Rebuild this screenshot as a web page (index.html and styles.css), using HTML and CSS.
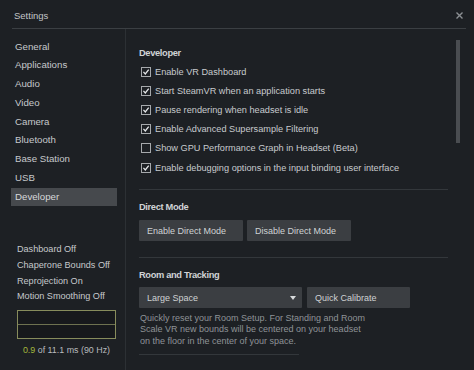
FILE: index.html
```html
<!DOCTYPE html>
<html lang="en">
<head>
  <meta charset="UTF-8"/>
  <title>Settings</title>
  <link rel="stylesheet" href="styles.css">
</head>
<body>
  <div class="window">
    <!-- Title bar -->
    <header class="titlebar">
      <span class="title">Settings</span>
      <svg class="close" width="7" height="7" viewBox="0 0 7 7">
        <path d="M0.5 0.5 L6.5 6.5 M6.5 0.5 L0.5 6.5" stroke="#8c9094" stroke-width="1.4"/>
      </svg>
    </header>

    <div class="body">
      <!-- Sidebar -->
      <nav class="sidebar">
        <ul class="menu">
          <li>General</li>
          <li>Applications</li>
          <li>Audio</li>
          <li>Video</li>
          <li>Camera</li>
          <li>Bluetooth</li>
          <li>Base Station</li>
          <li>USB</li>
          <li class="active">Developer</li>
        </ul>
        <div class="stats">
          <div class="stat">Dashboard Off</div>
          <div class="stat">Chaperone Bounds Off</div>
          <div class="stat">Reprojection On</div>
          <div class="stat">Motion Smoothing Off</div>
          <div class="graph">
            <div class="graph-top"></div>
            <div class="graph-bottom"></div>
          </div>
          <div class="frame-time"><span class="ms">0.9</span> of 11.1 ms (90 Hz)</div>
        </div>
      </nav>

      <!-- Content -->
      <main class="content">
        <div class="panel">
          <section class="group group-dev">
            <h2>Developer</h2>
            <label class="check"><span class="box on"><svg viewBox="0 0 10 10"><path d="M1.8 4.9 L4.1 7.4 L8.4 1.9"/></svg></span>Enable VR Dashboard</label>
            <label class="check"><span class="box on"><svg viewBox="0 0 10 10"><path d="M1.8 4.9 L4.1 7.4 L8.4 1.9"/></svg></span>Start SteamVR when an application starts</label>
            <label class="check"><span class="box on"><svg viewBox="0 0 10 10"><path d="M1.8 4.9 L4.1 7.4 L8.4 1.9"/></svg></span>Pause rendering when headset is idle</label>
            <label class="check"><span class="box on"><svg viewBox="0 0 10 10"><path d="M1.8 4.9 L4.1 7.4 L8.4 1.9"/></svg></span>Enable Advanced Supersample Filtering</label>
            <label class="check"><span class="box"></span>Show GPU Performance Graph in Headset (Beta)</label>
            <label class="check"><span class="box on"><svg viewBox="0 0 10 10"><path d="M1.8 4.9 L4.1 7.4 L8.4 1.9"/></svg></span>Enable debugging options in the input binding user interface</label>
          </section>

          <section class="group group-direct">
            <h2>Direct Mode</h2>
            <div class="buttons">
              <button class="btn">Enable Direct Mode</button>
              <button class="btn">Disable Direct Mode</button>
            </div>
          </section>

          <section class="group group-room">
            <h2>Room and Tracking</h2>
            <div class="buttons wide-gap">
              <div class="select">
                <span>Large Space</span>
                <svg width="6" height="4" viewBox="0 0 6 4"><path d="M0 0 L6 0 L3 4 Z" fill="#d8dadc"/></svg>
              </div>
              <button class="btn">Quick Calibrate</button>
            </div>
            <p class="hint">Quickly reset your Room Setup. For Standing and Room<br>Scale VR new bounds will be centered on your headset<br>on the floor in the center of your space.</p>
            <div class="rule"></div>
          </section>
        </div>
        <div class="scrollbar"><div class="thumb"></div></div>
      </main>
    </div>
  </div>
</body>
</html>
```

FILE: styles.css
```css
*, *::before, *::after { box-sizing: border-box; }

body {
  margin: 0;
  background: #1d2024;
  font-family: 'Liberation Sans', Arial, sans-serif;
  color: #c4c7ca;
}

.window {
  width: 474px; height: 370px;
  overflow: hidden;
  background: #1d2024;
}

/* Title bar */
.titlebar {
  height: 29px;
  margin: 0 8px 0 12px;
  padding: 3px 3px 0 2px;
  display: flex; align-items: center; justify-content: space-between;
  border-bottom: 1px solid #3b3f43;
}
.title { font-size: 9.5px; color: #c2c5c8; }

.body {
  display: flex;
  height: 341px;
}

/* Sidebar */
.sidebar {
  width: 126px; flex: none;
  border-right: 1px solid #2c3034;
  padding: 8.5px 8px 0 11px;
}
.menu { list-style: none; margin: 0; padding: 0; }
.menu li {
  height: 18.75px; line-height: 18.75px;
  padding-left: 4px;
  font-size: 9.7px; color: #c6c9cc;
}
.menu li.active { background: #46494d; color: #d6d8da; }

.stats { margin-top: 36px; padding-left: 6px; }
.stat { height: 15.7px; line-height: 15.7px; font-size: 9.1px; color: #c6c9cc; }
.graph {
  width: 99px; height: 29px;
  margin-top: 5px;
  border: 1px solid #878c5c;
  background: #17191c;
}
.graph-top { height: 14px; border-bottom: 1px solid #6e7250; }
.frame-time {
  width: 99px; margin-top: 5px;
  line-height: 12px; text-align: center;
  font-size: 8.9px; color: #b8bbbe;
}
.frame-time .ms { color: #a3b83c; }

/* Content */
.content { flex: 1; display: flex; }
.panel { width: 322px; padding-left: 13px; }

.group h2 {
  margin: 0;
  font-size: 9.3px; font-weight: bold;
  letter-spacing: -0.35px;
  color: #d0d3d6;
  line-height: 14px;
}
.group-dev { padding: 14.5px 0 12px; border-bottom: 1px solid #33373b; }
.group-dev h2 { line-height: 19px; }
.group-direct { padding: 10px 0 15.5px; border-bottom: 1px solid #33373b; }
.group-room { padding: 10px 0 0; }

.check {
  display: flex; align-items: center; gap: 4px;
  height: 19.1px;
  padding-left: 2px;
  font-size: 9.2px; color: #c8cbce;
}
.box {
  width: 10px; height: 10px; flex: none;
  border: 1px solid #a6a9ac;
  display: flex;
}
.box svg { width: 8px; height: 8px; }
.box path { fill: none; stroke: #e4e6e8; stroke-width: 1.6; }

.buttons { display: flex; gap: 4px; margin-top: 6px; }
.buttons.wide-gap { gap: 5px; margin-top: 5.5px; }
.btn, .select {
  height: 21px;
  background: #3b3e42;
  border: none; border-radius: 1px;
  padding: 0 6px 0 8px;
  font-family: inherit; font-size: 9px; color: #cfd2d4;
  text-align: left;
}
.btn { width: 104px; }
.buttons.wide-gap .btn { width: 103px; }
.select {
  width: 163px;
  display: flex; align-items: center; justify-content: space-between;
}

.hint {
  margin: 4.5px 0 0 1px;
  font-size: 9px; line-height: 11.5px;
  color: #8f9397;
}
.rule { width: 160px; margin-top: 7.4px; border-top: 1px solid #33373b; }

/* Scrollbar */
.scrollbar { width: 4px; margin-left: 8px; padding-top: 11px; }
.thumb { height: 103px; background: #4a4d51; }
```
